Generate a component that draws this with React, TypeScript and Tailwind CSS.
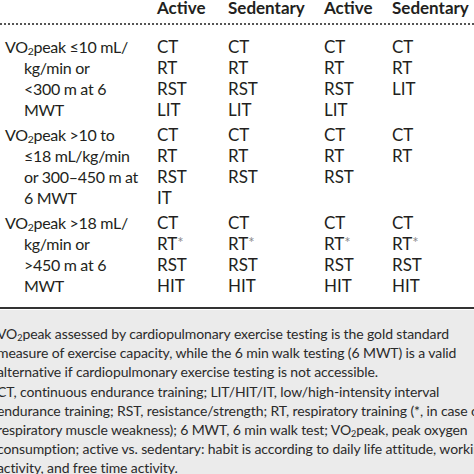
import React from 'react';

const font = { fontFamily: 'Lato, "Open Sans", sans-serif' };

function Vo2() {
  return (
    <>
      VO<span className="text-[0.65em] leading-none relative top-[0.18em]">2</span>peak
    </>
  );
}

function Star({ t }: { t: string }) {
  return (
    <>
      {t}
      <span className="text-[#8a8a8a] text-[15px] leading-none relative -top-[2px]">*</span>
    </>
  );
}

type Row = {
  label: React.ReactNode[];
  cols: React.ReactNode[][];
};

const rows: Row[] = [
  {
    label: [
      <><Vo2 /> ≤10 mL/</>,
      'kg/min or',
      '<300 m at 6',
      'MWT',
    ],
    cols: [
      ['CT', 'RT', 'RST', 'LIT'],
      ['CT', 'RT', 'RST', 'LIT'],
      ['CT', 'RT', 'RST', 'LIT'],
      ['CT', 'RT', 'LIT'],
    ],
  },
  {
    label: [
      <><Vo2 /> &gt;10 to</>,
      '≤18 mL/kg/min',
      'or 300–450 m at',
      '6 MWT',
    ],
    cols: [
      ['CT', 'RT', 'RST', 'IT'],
      ['CT', 'RT', 'RST'],
      ['CT', 'RT', 'RST'],
      ['CT', 'RT'],
    ],
  },
  {
    label: [
      <><Vo2 /> &gt;18 mL/</>,
      'kg/min or',
      '>450 m at 6',
      'MWT',
    ],
    cols: [
      ['CT', <Star t="RT" />, 'RST', 'HIT'],
      ['CT', <Star t="RT" />, 'RST', 'HIT'],
      ['CT', <Star t="RT" />, 'RST', 'HIT'],
      ['CT', <Star t="RT" />, 'RST', 'HIT'],
    ],
  },
];

const notes: React.ReactNode[] = [
  <><Vo2 /> assessed by cardiopulmonary exercise testing is the gold standard</>,
  'measure of exercise capacity, while the 6 min walk testing (6 MWT) is a valid',
  'alternative if cardiopulmonary exercise testing is not accessible.',
  'CT, continuous endurance training; LIT/HIT/IT, low/high-intensity interval',
  'endurance training; RST, resistance/strength; RT, respiratory training (*, in case of',
  <>respiratory muscle weakness); 6 MWT, 6 min walk test; <Vo2 />, peak oxygen</>,
  'consumption; active vs. sedentary: habit is according to daily life attitude, working',
  'activity, and free time activity.',
];

export default function App() {
  return (
    <div className="w-[474px] h-[474px] overflow-hidden bg-white text-[#231f20]" style={font}>
      <div className="grid grid-cols-[157px_71px_96px_68px_82px] font-bold text-[17px] leading-[21px] -mt-[3px] pb-[5px] border-b-2 border-dotted border-[#555]">
        <div />
        <div>Active</div>
        <div>Sedentary</div>
        <div>Active</div>
        <div>Sedentary</div>
      </div>

      <div className="pt-[11px] pb-[11px] flex flex-col gap-[4px] border-b-2 border-[#333]">
        {rows.map((r, i) => (
          <div key={i} className="grid grid-cols-[157px_71px_96px_68px_82px] text-[17px] leading-[21px]">
            <div className="pl-[5px] text-[16px] tracking-[-0.3px]">
              {r.label.map((l, j) => (
                <div key={j} className={j > 0 ? 'pl-[19px] whitespace-nowrap' : 'whitespace-nowrap'}>
                  {l}
                </div>
              ))}
            </div>
            {r.cols.map((c, k) => (
              <div key={k}>
                {c.map((v, j) => (
                  <div key={j}>{v}</div>
                ))}
              </div>
            ))}
          </div>
        ))}
      </div>

      <div className="mt-[1px] h-full bg-[#ebebeb] pt-[14px] text-[14px] tracking-[-0.1px] leading-[19.2px] text-[#2a2a2a] -ml-[3px]">
        {notes.map((n, i) => (
          <div key={i} className="whitespace-nowrap">
            {n}
          </div>
        ))}
      </div>
    </div>
  );
}
